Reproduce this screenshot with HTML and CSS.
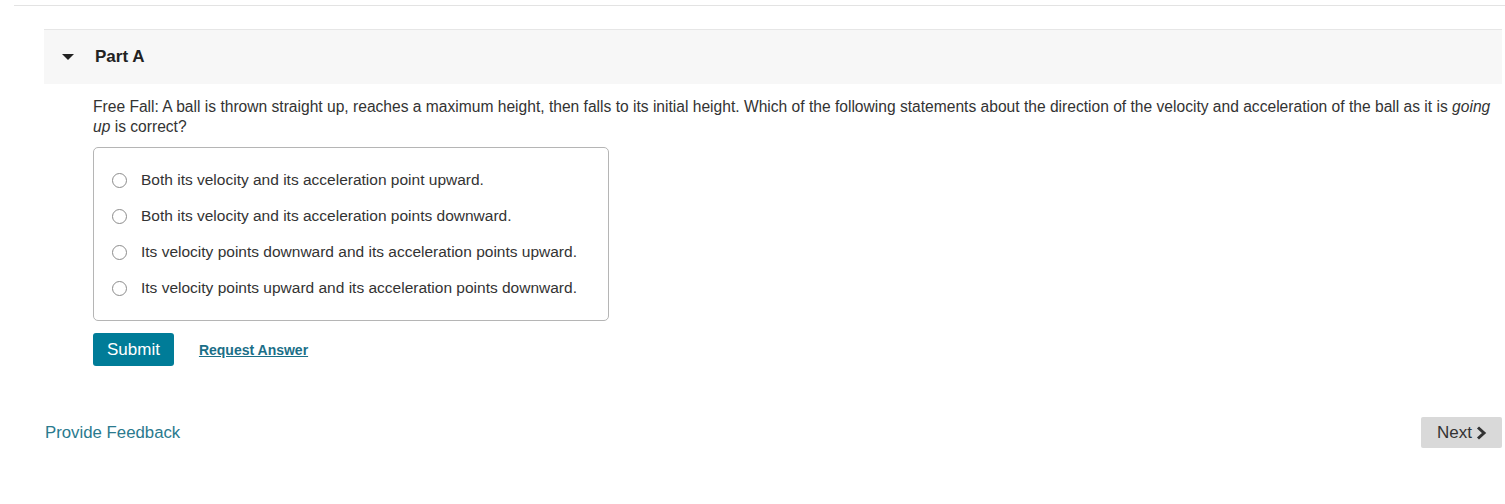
FILE: index.html
```html
<!DOCTYPE html>
<html lang="en">

<head>
    <meta charset="UTF-8">
    <title>Part A</title>
    <link rel="stylesheet" href="styles.css">
</head>

<body>
    <div class="top-rule"></div>

    <div class="page">
        <div class="part-header">
            <span class="caret"></span>
            <h2>Part A</h2>
        </div>

        <div class="part-body">
            <p class="question">Free Fall: A ball is thrown straight up, reaches a maximum height, then falls to its initial height. Which of the following statements about the direction of the velocity and acceleration of the ball as it is <em>going up</em> is correct?</p>

            <div class="choices">
                <label class="choice"><span class="radio"></span>Both its velocity and its acceleration point upward.</label>
                <label class="choice"><span class="radio"></span>Both its velocity and its acceleration points downward.</label>
                <label class="choice"><span class="radio"></span>Its velocity points downward and its acceleration points upward.</label>
                <label class="choice"><span class="radio"></span>Its velocity points upward and its acceleration points downward.</label>
            </div>

            <div class="actions">
                <button class="submit">Submit</button>
                <a class="request" href="#">Request Answer</a>
            </div>
        </div>

        <div class="footer">
            <a class="feedback" href="#">Provide Feedback</a>
            <button class="next">Next
                <svg width="11" height="14" viewBox="0 0 11 14"><path d="M2 1.5 L8 7 L2 12.5" fill="none" stroke="#333" stroke-width="3"/></svg>
            </button>
        </div>
    </div>
</body>

</html>
```

FILE: styles.css
```css
body {
    font-family: "Liberation Sans", Arial, sans-serif;
    color: #333;
    background-color: #fff;
    margin: 0;
    padding: 0;
}

.top-rule {
    margin-left: 14px;
    margin-top: 5px;
    border-top: 1px solid #e3e3e3;
}

.page {
    padding: 23px 3px 0 44px;
}

.part-header {
    display: flex;
    align-items: center;
    height: 55px;
    border-top: 1px solid #e6e6e6;
    background-color: #f7f7f7;
    box-sizing: border-box;
    padding-left: 18px;
}

.caret {
    width: 0;
    height: 0;
    border-left: 6px solid transparent;
    border-right: 6px solid transparent;
    border-top: 6px solid #222;
    margin-right: 21px;
}

.part-header h2 {
    font-size: 17px;
    font-weight: bold;
    color: #222;
    margin: 0;
}

.part-body {
    padding-left: 49px;
}

.question {
    font-size: 15.6px;
    line-height: 20px;
    margin: 13px 0 10px;
}

.choices {
    width: 516px;
    box-sizing: border-box;
    border: 1px solid #b5b5b5;
    border-radius: 5px;
    padding: 14px 18px;
}

.choice {
    display: flex;
    align-items: center;
    height: 36px;
    font-size: 15.5px;
}

.radio {
    width: 15px;
    height: 15px;
    box-sizing: border-box;
    border: 1px solid #8c8c8c;
    border-radius: 50%;
    background-color: #fff;
    margin-right: 14px;
}

.actions {
    display: flex;
    align-items: center;
    margin-top: 12px;
}

.submit {
    height: 33px;
    padding: 0 14px;
    background-color: #007c98;
    color: #fff;
    border: none;
    border-radius: 3px;
    font-family: inherit;
    font-size: 17px;
}

.request {
    margin-left: 25px;
    font-size: 14px;
    font-weight: bold;
    color: #1b6f88;
    text-decoration: underline;
}

.footer {
    display: flex;
    justify-content: space-between;
    align-items: center;
    margin-top: 51px;
    margin-left: 1px;
}

.feedback {
    font-size: 16.8px;
    color: #2a7a8e;
    text-decoration: none;
}

.next {
    display: flex;
    align-items: center;
    gap: 4px;
    height: 31px;
    padding: 0 15px 0 16px;
    background-color: #d9d9d9;
    color: #333;
    border: none;
    border-radius: 2px;
    font-family: inherit;
    font-size: 17px;
}
```
